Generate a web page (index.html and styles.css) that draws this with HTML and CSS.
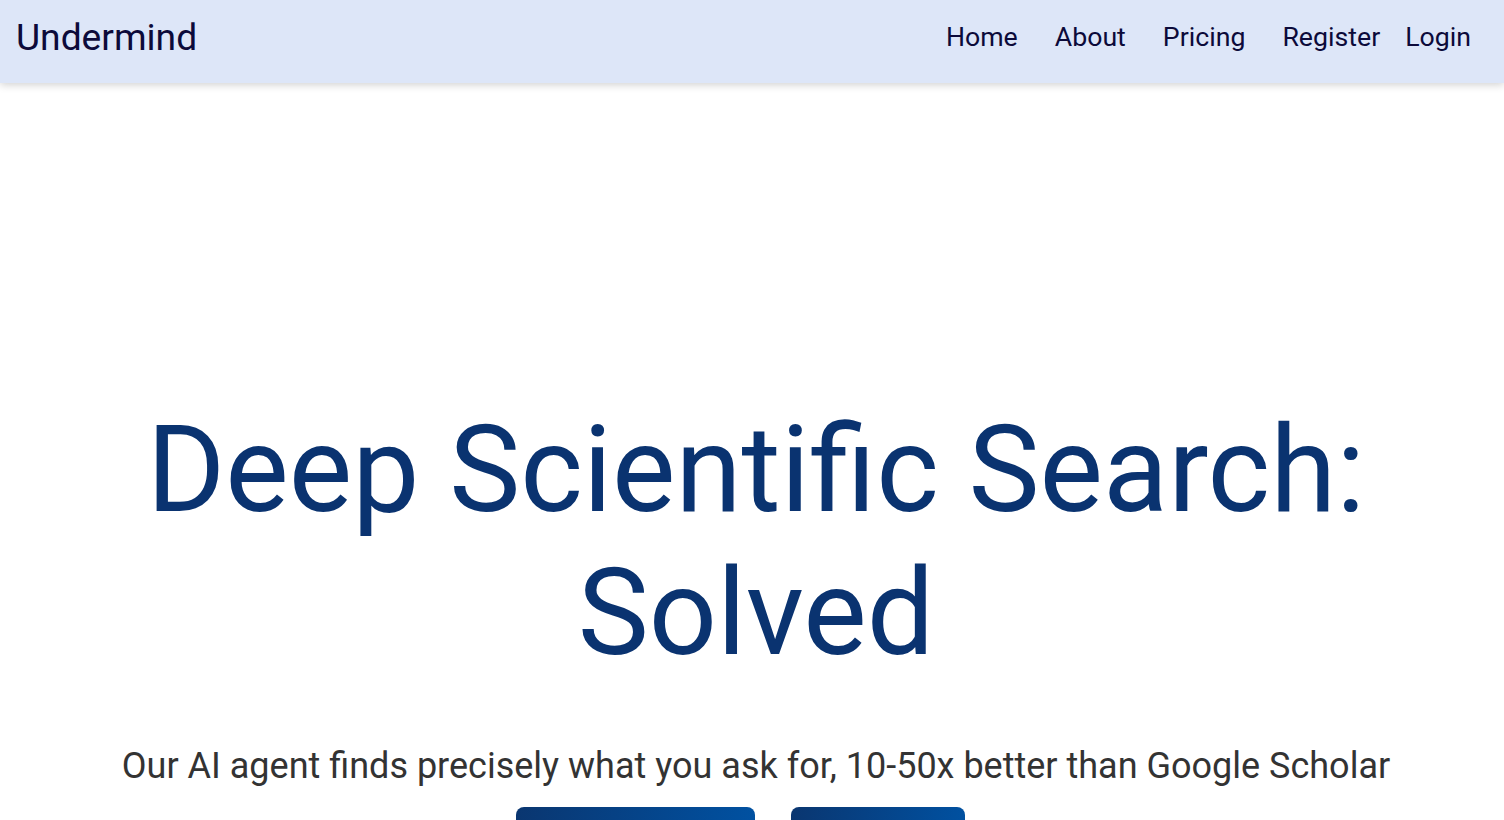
FILE: index.html
```html
<!DOCTYPE html>
<html>
<head>
<meta charset="utf-8">
<link rel="stylesheet" href="styles.css">
</head>
<body>
<header class="topbar">
  <a class="brand" href="#">Undermind</a>
  <nav class="nav">
    <a href="#">Home</a>
    <a href="#">About</a>
    <a href="#">Pricing</a>
    <a href="#" class="reg">Register</a>
    <a href="#">Login</a>
  </nav>
</header>
<main class="hero">
  <h1 class="title">Deep Scientific Search:<br>Solved</h1>
  <p class="sub">Our AI agent finds precisely what you ask for, 10-50x better than Google Scholar</p>
  <div class="actions">
    <a class="btn btn-a" href="#" aria-label="Try it free"></a>
    <a class="btn btn-b" href="#" aria-label="Learn more"></a>
  </div>
</main>
</body>
</html>
```
FILE: styles.css
```css
* { box-sizing: border-box; }
html, body { margin: 0; padding: 0; }
body {
  font-family: Roboto, "Noto Sans", sans-serif;
  background: #fff;
  overflow: hidden;
  height: 820px;
}
a { text-decoration: none; }
.topbar {
  height: 83px;
  background: #dde6f8;
  display: flex;
  align-items: center;
  justify-content: space-between;
  padding: 0 33px 8px 16px;
  box-shadow: 0 2px 8px rgba(0,0,0,0.18);
  position: relative;
  z-index: 1;
}
.brand {
  font-size: 37.2px;
  color: #0c0a3a;
  line-height: 1;
}
.nav {
  display: flex;
  gap: 37px;
  font-size: 26.7px;
  line-height: 1;
}
.nav a { color: #0c0a3a; }
.nav .reg { margin-right: -12px; }
.hero {
  height: 737px;
  overflow: hidden;
  display: flex;
  flex-direction: column;
  align-items: center;
  padding-top: 316px;
  padding-left: 8px;
}
.title {
  margin: 0;
  font-weight: 400;
  font-size: 119.7px;
  line-height: 143px;
  color: #0a3370;
  text-align: center;
}
.sub {
  margin: 60px 0 0;
  font-size: 36px;
  color: #333;
  line-height: 1.2;
}
.actions {
  display: flex;
  gap: 36px;
  margin-top: 19px;
  padding-right: 31px;
}
.btn {
  display: block;
  flex: none;
  height: 60px;
  border-radius: 8px;
  background: linear-gradient(100deg, #0a3670, #0052a3);
}
.btn-a { width: 239px; }
.btn-b { width: 174px; }
```
